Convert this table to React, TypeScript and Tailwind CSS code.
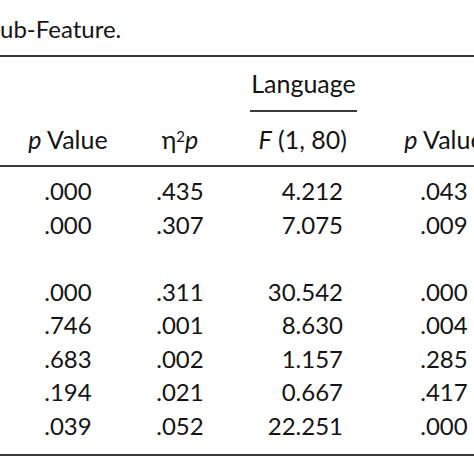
const rows: (string[] | null)[] = [
  [".000", ".435", "4.212", ".043"],
  [".000", ".307", "7.075", ".009"],
  null,
  [".000", ".311", "30.542", ".000"],
  [".746", ".001", "8.630", ".004"],
  [".683", ".002", "1.157", ".285"],
  [".194", ".021", "0.667", ".417"],
  [".039", ".052", "22.251", ".000"],
];

const cols = "grid grid-cols-[8px_120px_104px_123px_178px]";

export default function App() {
  return (
    <div className="w-[474px] h-[474px] overflow-hidden bg-white text-[#141414] font-['Lato',sans-serif] text-[24px]">
      <div className="w-[533px]">
        <div className="pt-[17px] pb-[14px] leading-[24px] whitespace-nowrap">ub-Feature.</div>
        <div className="h-[2px] bg-[#3a3a3a]" />

        <div className={`${cols} pt-[14px] leading-[24px]`}>
          <div />
          <div />
          <div />
          <div className="pl-[18px]">
            <div className="w-[107px] pb-[15px] border-b-2 border-[#3a3a3a] text-center text-[25px]">Language</div>
          </div>
          <div />
        </div>

        <div className={`${cols} pt-[15px] pb-[14px] leading-[24px] whitespace-nowrap text-[25px]`}>
          <div />
          <div className="text-center">
            <i>p</i> Value
          </div>
          <div className="text-center">
            η<sup className="text-[15px]">2</sup>
            <i>p</i>
          </div>
          <div className="text-right pr-[8px]">
            <i>F</i> (1, 80)
          </div>
          <div className="text-center">
            <i>p</i> Value
          </div>
        </div>
        <div className="h-[2px] bg-[#3a3a3a]" />

        <div className="pt-[7px] pb-[12px]">
          {rows.map((r, i) =>
            r ? (
              <div key={i} className={`${cols} h-[33.5px] leading-[33.5px]`}>
                <div />
                <div className="text-center">{r[0]}</div>
                <div className="text-center">{r[1]}</div>
                <div className="text-right pr-[12px]">{r[2]}</div>
                <div className="text-center">{r[3]}</div>
              </div>
            ) : (
              <div key={i} className="h-[33.5px]" />
            )
          )}
        </div>
        <div className="h-[2px] bg-[#3a3a3a]" />
      </div>
    </div>
  );
}
